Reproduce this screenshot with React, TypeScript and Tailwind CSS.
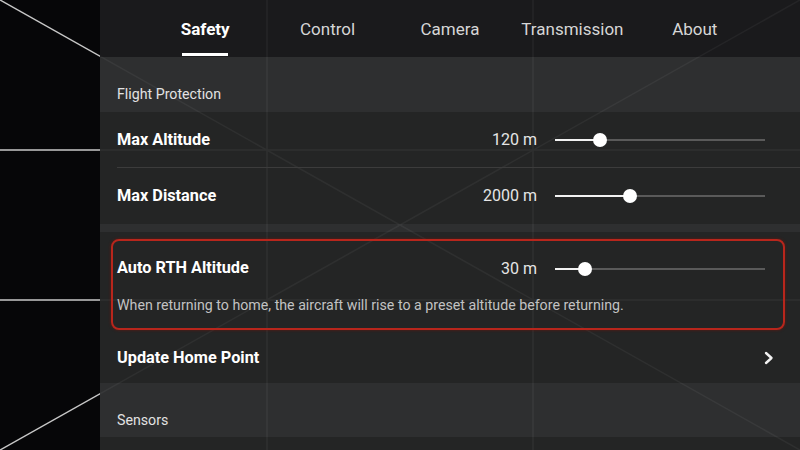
import React from "react";

const font = { fontFamily: "Roboto, 'Noto Sans', sans-serif" };

function Slider({ pct }: { pct: number }) {
  return (
    <div className="relative h-[14px] w-[210px] shrink-0">
      <div className="absolute left-0 right-0 top-[6px] h-[2px] bg-[#5a5a5a]" />
      <div className="absolute left-0 top-[6px] h-[2px] bg-[#f2f2f2]" style={{ width: `${pct}px` }} />
      <div
        className="absolute top-0 h-[14px] w-[14px] rounded-full bg-white"
        style={{ left: `${pct - 7}px` }}
      />
    </div>
  );
}

function ValueRow({ label, value, pct, divider }: { label: string; value: string; pct: number; divider?: boolean }) {
  return (
    <div className="relative flex h-[56px] items-center bg-[#262727]/[0.95] pl-[17px] pr-[35px]">
      <div className="flex-1 text-[16.3px] font-bold text-white">{label}</div>
      <div className="mr-[18px] text-right text-[16px] text-[#e6e6e6]">{value}</div>
      <Slider pct={pct} />
      {divider && <div className="absolute bottom-0 left-[17px] right-0 h-px bg-[#3c3c3c]" />}
    </div>
  );
}

export default function App() {
  const tabs = ["Safety", "Control", "Camera", "Transmission", "About"];
  return (
    <div className="relative flex h-[450px] w-[800px] overflow-hidden bg-[#060608]" style={font}>
      <svg className="absolute inset-0 z-0" width="800" height="450">
        <g stroke="#c8c8c8" strokeWidth="1.5">
          <line x1="0" y1="0" x2="800" y2="450" />
          <line x1="0" y1="450" x2="800" y2="0" />
          <line x1="0" y1="150" x2="800" y2="150" />
          <line x1="0" y1="300" x2="800" y2="300" />
          <line x1="267" y1="0" x2="267" y2="450" />
          <line x1="533" y1="0" x2="533" y2="450" />
        </g>
      </svg>
      <div className="w-[100px] shrink-0" />
      <div className="relative z-10 flex flex-1 flex-col">
        <div className="grid h-[57px] grid-cols-5 bg-[#1b1b1d]/[0.95] px-[44px]">
          {tabs.map((t, i) => (
            <div key={t} className="relative flex items-center justify-center pt-[3px]">
              <span className={i === 0 ? "text-[17px] font-bold text-white" : "text-[17px] text-[#d6d6d6]"}>{t}</span>
              {i === 0 && <div className="absolute bottom-[1px] left-1/2 h-[3px] w-[46px] -translate-x-1/2 bg-white" />}
            </div>
          ))}
        </div>
        <div className="flex h-[55px] items-center bg-[#303133]/[0.95] pl-[17px] pt-[21px] text-[14.2px] text-[#e2e2e2]">
          Flight Protection
        </div>
        <ValueRow label="Max Altitude" value="120 m" pct={45} divider />
        <ValueRow label="Max Distance" value="2000 m" pct={75} />
        <div className="h-[8px] bg-[#303133]/[0.95]" />
        <div className="h-[101px] bg-[#262727]/[0.95] pb-[3px] pl-[11px] pr-[15px] pt-[7px]">
          <div className="flex h-[91px] flex-col rounded-[8px] border-2 border-[#b8261c] pl-[4px] pr-[18px] shadow-[0_0_3px_rgba(120,20,10,0.8)]">
            <div className="flex h-[52px] items-center pt-[3px]">
              <div className="flex-1 text-[16.3px] font-bold text-white">Auto RTH Altitude</div>
              <div className="mr-[18px] text-[16px] text-[#e6e6e6]">30 m</div>
              <Slider pct={30} />
            </div>
            <div className="pt-[2px] text-[14.2px] leading-[20px] text-[#c2c2c2]">
              When returning to home, the aircraft will rise to a preset altitude before returning.
            </div>
          </div>
        </div>
        <div className="flex h-[50px] items-center bg-[#262727]/[0.95] pl-[17px] pr-[26px]">
          <div className="flex-1 text-[16.3px] font-bold text-white">Update Home Point</div>
          <svg width="10" height="14" viewBox="0 0 10 14">
            <polyline points="2,2 7.5,7 2,12" fill="none" stroke="#f2f2f2" strokeWidth="2.4" strokeLinecap="round" strokeLinejoin="round" />
          </svg>
        </div>
        <div className="flex h-[54px] items-center bg-[#303133]/[0.95] pl-[17px] pt-[22px] text-[14.2px] text-[#e2e2e2]">
          Sensors
        </div>
        <div className="flex-1 bg-[#262727]/[0.95]" />
      </div>
    </div>
  );
}
